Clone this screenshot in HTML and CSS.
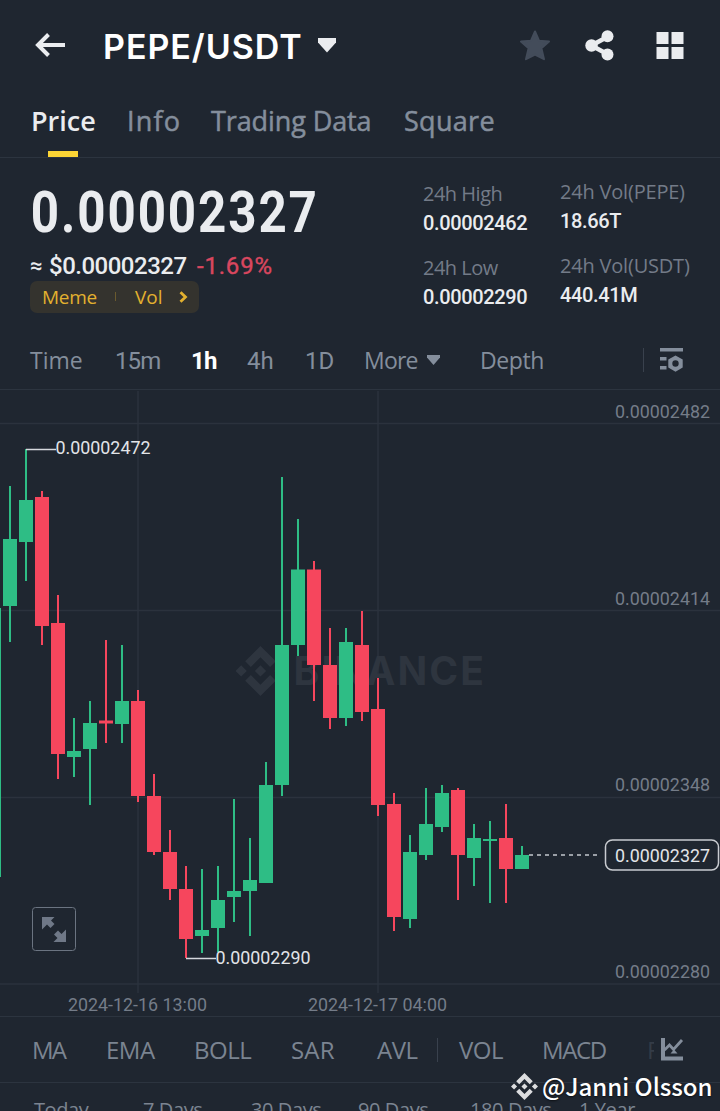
FILE: index.html
```html
<!DOCTYPE html>
<html lang="en">
<head>
<meta charset="utf-8">
<title>PEPE/USDT</title>
<link rel="stylesheet" href="styles.css">
</head>
<body>
<div class="app">
  <header class="header">
    <svg class="back" width="30" height="24" viewBox="0 0 30 24" fill="none" stroke="#eaecef" stroke-width="4"><path d="M30 12H3M13.500 1.500L3 12l10.500 10.500"/></svg>
    <h1 class="pair">PEPE/USDT</h1>
    <svg class="caret" width="18" height="15" viewBox="0 0 18 15" fill="#eaecef"><path d="M0 0h18v4.500L9 14.500 0 4.500z"/></svg>
    <span class="grow"></span>
    <svg class="star" width="30" height="31" viewBox="0 0 30 31" fill="#434c5a" stroke="#434c5a" stroke-width="2" stroke-linejoin="round"><path d="M15 1.500l4 9.200 10 .9-7.600 6.600 2.600 11L15 24.600 6 29.200l2.600-11L1 11.600l10-.9z"/></svg>
    <svg class="share" width="30" height="31" viewBox="0 0 30 31" fill="#eaecef"><path d="M6.500 15.500L23 6.500M6.500 15.500L23 24.500" stroke="#eaecef" stroke-width="4.500"/><circle cx="6.500" cy="15.500" r="6.200"/><circle cx="22.500" cy="6.300" r="6"/><circle cx="22.500" cy="24.500" r="6"/></svg>
    <svg width="28" height="27" viewBox="0 0 28 27" fill="#eaecef"><path d="M.5 0h12v12H.500zM15.500 0h12v12h-12zM.5 15h12v12H.500zM15.500 15h12v12h-12z"/></svg>
  </header>

  <nav class="tabs">
    <span class="tab tab-on">Price</span>
    <span class="tab tab-info">Info</span>
    <span class="tab tab-data">Trading Data</span>
    <span class="tab tab-square">Square</span>
  </nav>

  <section class="ticker">
    <div class="quote">
      <div class="last">0.00002327</div>
      <div class="fiat"><span class="approx">≈</span><span class="usd">$0.00002327</span><span class="change">-1.69%</span></div>
      <div class="tag"><span class="tag-meme">Meme</span><i class="tag-sep"></i><span>Vol</span>
        <svg class="tag-arrow" width="9" height="12" viewBox="0 0 9 12" fill="none" stroke="#e3b12f" stroke-width="2.800"><path d="M1.500 1.200L6.500 6l-5 4.800"/></svg>
      </div>
    </div>
    <dl class="stats">
      <dt>24h High</dt><dd>0.00002462</dd>
      <dt>24h Low</dt><dd>0.00002290</dd>
    </dl>
    <dl class="stats stats-vol">
      <dt>24h Vol(PEPE)</dt><dd>18.66T</dd>
      <dt>24h Vol(USDT)</dt><dd>440.41M</dd>
    </dl>
  </section>

  <nav class="ranges">
    <span>Time</span>
    <span class="num tight">15m</span>
    <span class="num range-on">1h</span>
    <span class="num">4h</span>
    <span class="num">1D</span>
    <span class="more">More</span>
    <svg class="more-caret" width="13" height="10" viewBox="0 0 13 10" fill="#848e9c"><path d="M0 0h13v2.500L6.500 10 0 2.500z"/></svg>
    <span class="depth">Depth</span>
    <i class="rule"></i>
    <svg width="24" height="24" viewBox="0 0 24 24" fill="#848e9c"><path d="M0 0h23v3.500H0zM0 9h6.500v3.500H0zM0 18h6.500v3.500H0z"/><path fill-rule="evenodd" d="M15.500 7.500l7.200 4v8L15.500 23.800l-7.200-4.300v-8zM15.500 12.300a3.200 3.200 0 1 0 0 6.400 3.200 3.200 0 0 0 0-6.400z"/></svg>
  </nav>

  <div class="chart">
    <svg width="720" height="627" viewBox="0 390 720 627" id="chart">
      <g class="grid">
        <path d="M0 423.500H720M0 610.500H720M0 797.500H720M0 984H720M138 391V993M378 391V993"/>
      </g>
      <g class="brand">
        <svg x="235.500" y="646" width="50" height="50" viewBox="0 0 24 24"><path d="M16.624 13.920l2.718 2.715-7.353 7.353-7.353-7.352 2.717-2.716 4.636 4.660 4.635-4.660zm4.637-4.636L24 12l-2.715 2.716L18.568 12l2.693-2.716zm-9.272 0l2.716 2.692-2.716 2.717L9.272 12l2.717-2.715zm-9.273 0L5.409 12l-2.692 2.692L0 12l2.716-2.716zM11.989.012l7.353 7.329-2.718 2.715-4.635-4.635-4.636 4.659-2.717-2.715z"/></svg>
        <text x="293.500" y="685" textLength="190.500">BINANCE</text>
      </g>
      <g id="candles"></g>
      <path class="lead" d="M26 449.500H56M186 958.500H216"/>
      <path class="last-line" d="M529 855H598"/>
      <rect class="last-box" x="605.500" y="840" width="113" height="30" rx="7"/>
      <g class="bright">
        <text x="55.500" y="454">0.00002472</text>
        <text x="215.500" y="964">0.00002290</text>
        <text x="615" y="862">0.00002327</text>
      </g>
      <g class="axis">
        <text x="615" y="418">0.00002482</text>
        <text x="615" y="605">0.00002414</text>
        <text x="615" y="791">0.00002348</text>
        <text x="615" y="978">0.00002280</text>
        <text x="68" y="1011">2024-12-16 13:00</text>
        <text x="308" y="1011">2024-12-17 04:00</text>
      </g>
      <g class="expand">
        <rect x="32.500" y="907.500" width="43" height="43" rx="3"/>
        <path d="M42 917h12.500l-3.500 3.500 3.500 3.500-4 4-3.500-3.500-5 5zM66 942H53.500l4-4-3.500-3.500 4-4 3.500 3.500 4.500-4.500z"/>
      </g>
    </svg>
  </div>

  <nav class="indicators">
    <span class="ma">MA</span>
    <span>EMA</span>
    <span>BOLL</span>
    <span class="sar">SAR</span>
    <span>AVL</span>
    <i class="rule"></i>
    <span>VOL</span>
    <span class="macd">MACD</span>
    <span class="faded">F</span>
    <svg width="24" height="24" viewBox="0 0 24 24" fill="none" stroke="#848e9c"><path stroke-width="4" d="M2 0V20.500H22"/><path stroke-width="2.800" d="M3.500 12L8.500 7l4 4.500L21 2"/><path fill="#848e9c" stroke="none" d="M13 11.500l3.500 4h-7z"/></svg>
  </nav>

  <nav class="periods">
    <span>Today</span><span>7 Days</span><span>30 Days</span><span>90 Days</span><span>180 Days</span><span>1 Year</span>
  </nav>
</div>

<div class="credit">
  <svg width="27" height="27" viewBox="0 0 24 24" fill="#dcdddf"><path d="M16.624 13.920l2.718 2.715-7.353 7.353-7.353-7.352 2.717-2.716 4.636 4.660 4.635-4.660zm4.637-4.636L24 12l-2.715 2.716L18.568 12l2.693-2.716zm-9.272 0l2.716 2.692-2.716 2.717L9.272 12l2.717-2.715zm-9.273 0L5.409 12l-2.692 2.692L0 12l2.716-2.716zM11.989.012l7.353 7.329-2.718 2.715-4.635-4.635-4.636 4.659-2.717-2.715z"/></svg>
  <span>@Janni Olsson</span>
</div>
<script src="script.js"></script>
</body>
</html>
```

FILE: styles.css
```css
* { box-sizing: border-box; }
body {
  margin: 0;
  background: #1f2630;
  color: #eaecef;
  font-family: "Open Sans", "Noto Sans", sans-serif;
}
.app {
  width: 720px;
  height: 1111px;
  overflow: hidden;
  display: flex;
  flex-direction: column;
}
.app > * { flex: none; }
svg { display: block; flex: none; }
.grow { flex: 1; }
.rule { width: 1px; height: 24px; background: #39414d; }

.header {
  height: 90px;
  padding: 0 36px 0 35px;
  display: flex;
  align-items: center;
}
.pair {
  margin: 3px 0 0 38px;
  width: 215px;
  font: 600 34px/44px Inter, Roboto, sans-serif;
  letter-spacing: 0.95px;
  color: #fff;
}
.star { margin-right: 35px; }
.share { margin-right: 41px; }

.tabs {
  height: 68px;
  border-bottom: 1px solid #2c343f;
  padding-left: 31px;
  display: grid;
  grid-template-columns: 96px 84px 192px 200px;
  font-size: 27px;
  line-height: 62px;
  color: #848e9c;
}
.tab { -webkit-text-stroke: 0.5px; white-space: nowrap; }
.tab-on {
  position: relative;
  font-weight: 600;
  color: #eaecef;
  -webkit-text-stroke: 0;
}
.tab-on::after {
  content: "";
  position: absolute;
  left: 17px;
  bottom: 0;
  width: 30px;
  height: 6px;
  background: #fcd535;
}
.tab-info { letter-spacing: 1.2px; }
.tab-data { letter-spacing: -0.1px; }
.tab-square { letter-spacing: 0.3px; padding-left: 1px; }

.ticker {
  height: 172px;
  padding: 24px 0 0 30px;
  display: grid;
  grid-template-columns: 393px 137px 160px;
  align-items: start;
}
.last {
  padding: 3px 0 0 1px;
  height: 56px;
  font: 700 57px/56px Roboto, sans-serif;
  letter-spacing: 2.2px;
  transform: scaleX(0.865);
  transform-origin: left;
}
.fiat {
  height: 41px;
  padding-top: 16px;
  display: flex;
  font: 500 24px/24px Roboto, sans-serif;
}
.approx { width: 19px; font-size: 22px; }
.usd { width: 148px; letter-spacing: -0.5px; }
.change { color: #d9475f; font-weight: 400; letter-spacing: 0.8px; -webkit-text-stroke: 0.4px; }
.tag {
  margin-top: 2px;
  width: 169px;
  height: 32px;
  border-radius: 7px;
  background: #34332e;
  color: #e3b12f;
  padding: 0 0 1px 12px;
  display: flex;
  align-items: center;
  font-size: 19px;
}
.tag-meme { width: 73px; letter-spacing: -0.3px; }
.tag-sep { width: 1px; height: 9px; margin-right: 19px; background: #6a5a2e; }
.tag-arrow { margin-left: 16px; }

.stats { margin: -2px 0 0; white-space: nowrap; }
.stats dt { font-size: 20px; line-height: 28px; letter-spacing: -0.5px; color: #737b88; }
.stats dd {
  margin: 1px 0 17px;
  font: 500 20px/28px Roboto, sans-serif;
  letter-spacing: -0.35px;
}
.stats-vol { margin-top: -4px; }
.stats-vol dt { letter-spacing: -0.2px; }

.ranges {
  height: 60px;
  border-bottom: 1px solid #2c343f;
  padding-left: 30px;
  display: grid;
  grid-template-columns: 85px 76px 56px 58px 60px 62px 53px 163px 17px 24px;
  align-items: center;
  font-size: 23px;
  line-height: 58px;
  color: #848e9c;
}
.num { font-family: Roboto, sans-serif; font-size: 24px; padding-top: 2px; line-height: 56px; }
.tight { letter-spacing: -0.9px; }
.range-on { color: #fff; font-weight: 700; letter-spacing: -0.8px; }
.more { letter-spacing: -0.8px; margin-left: -1px; }
.depth { letter-spacing: -0.4px; }

.chart { height: 627px; }
.chart text { font-family: Roboto, sans-serif; font-size: 17.850px; }
.grid path { stroke: #2b323d; stroke-width: 1.500; }
.brand { fill: #2e353f; }
.chart .brand text { font: 700 39px Inter, sans-serif; }
.up { fill: #2ebd85; }
.down { fill: #f6465d; }
.lead { stroke: #d5d8dd; stroke-width: 1.500; }
.last-line { stroke: #c3c7cd; stroke-width: 1.300; stroke-dasharray: 4 4; }
.last-box { fill: none; stroke: #c9ccd1; stroke-width: 1.500; }
.bright { fill: #e2e4e8; }
.axis { fill: #747c88; }
.expand rect { fill: #1f2630; stroke: #6b7481; }
.expand path { fill: #6f7887; }

.indicators {
  height: 67px;
  margin-top: -1px;
  border: solid #2c343f;
  border-width: 1px 0;
  padding: 1px 0 0 32px;
  display: grid;
  grid-template-columns: 74px 88px 97px 86px 60px 22px 83px 105px 14px 24px;
  align-items: center;
  font-size: 24px;
  line-height: 60px;
  letter-spacing: -0.5px;
  color: #7b8491;
}
.ma { letter-spacing: -1.8px; }
.sar { letter-spacing: 0.2px; }
.macd { letter-spacing: -1.4px; }
.faded { color: #343c47; width: 7px; overflow: hidden; }

.periods {
  height: 28px;
  padding-left: 34px;
  display: grid;
  grid-template-columns: 109px 108px 107px 112px 109px 90px;
  font-size: 20px;
  line-height: 53px;
  letter-spacing: -0.4px;
  color: #7b8491;
  white-space: nowrap;
}

.credit {
  position: absolute;
  left: 511px;
  top: 1068px;
  height: 36px;
  display: flex;
  align-items: center;
  gap: 4px;
  font: 500 24px/36px "Noto Sans CJK SC", sans-serif;
  color: #fff;
  white-space: nowrap;
  text-shadow: 0 1px 2px rgba(0, 0, 0, 0.6);
}
```

FILE: script.js
```js
// Each candle: direction, high, body top, body bottom, low (y positions).
const candles = [
  ["up", 486, 539, 606, 642], ["up", 449, 500, 542, 581], ["down", 491, 497, 626, 645],
  ["down", 595, 623, 754, 779], ["up", 718, 751, 757, 777], ["up", 701, 723, 749, 805],
  ["down", 640, 720.5, 723.5, 743], ["up", 645, 701, 724, 743], ["down", 690, 701, 796, 802],
  ["down", 774, 796, 852, 855], ["down", 830, 852, 889, 900], ["down", 866, 889, 939, 958],
  ["up", 869, 930, 936, 953], ["up", 866, 900, 928, 952], ["up", 799, 891, 897, 922],
  ["up", 838, 880, 891, 936], ["up", 762, 785, 883, 883], ["up", 477, 645, 785, 796],
  ["up", 519, 569.5, 645, 656], ["down", 561, 569.5, 665, 701], ["down", 628, 665, 718, 729],
  ["up", 628, 642, 718, 726], ["down", 611, 645, 712, 721], ["down", 678, 709, 805, 816],
  ["down", 793, 804, 917, 931], ["up", 835, 852, 919, 928], ["up", 788, 824, 855, 860],
  ["up", 785, 793, 827, 832], ["down", 788, 790, 855, 900], ["up", 824, 838, 858, 886],
  ["up", 821, 839, 841, 903], ["down", 804, 838, 869, 903], ["up", 846, 855, 869, 869]
];
const layer = document.getElementById("candles");
function bar(cls, x, y, w, h) {
  const r = document.createElementNS("http://www.w3.org/2000/svg", "rect");
  r.setAttribute("class", cls);
  r.setAttribute("x", x);
  r.setAttribute("y", y);
  r.setAttribute("width", w);
  r.setAttribute("height", h);
  layer.append(r);
}
bar("up", 0, 608, 1, 269);
candles.forEach(([cls, high, top, bottom, low], i) => {
  const x = 10 + i * 16;
  bar(cls, x - 1, high, 2, low - high);
  bar(cls, x - 7, top, 14, bottom - top);
});
```
